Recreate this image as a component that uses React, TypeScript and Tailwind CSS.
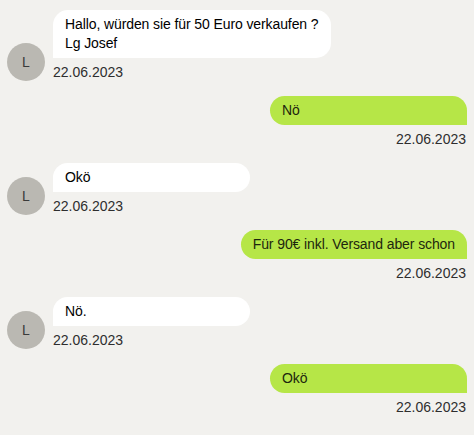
import React from "react";

type Msg = { side: "in" | "out"; text: string[]; date: string };

const messages: Msg[] = [
  { side: "in", text: ["Hallo, würden sie für 50 Euro verkaufen ?", "Lg Josef"], date: "22.06.2023" },
  { side: "out", text: ["Nö"], date: "22.06.2023" },
  { side: "in", text: ["Okö"], date: "22.06.2023" },
  { side: "out", text: ["Für 90€ inkl. Versand aber schon"], date: "22.06.2023" },
  { side: "in", text: ["Nö."], date: "22.06.2023" },
  { side: "out", text: ["Okö"], date: "22.06.2023" },
];

function Avatar() {
  return (
    <div className="mb-px flex h-[38px] w-[38px] shrink-0 items-center justify-center rounded-full bg-[#bab8b2] text-[14px] text-[#3a3a3a]">
      L
    </div>
  );
}

function Bubble({ msg }: { msg: Msg }) {
  const out = msg.side === "out";
  return (
    <div
      className={
        out
          ? "min-w-[197px] rounded-[15px] rounded-br-none bg-[#b6e647] px-[12px] py-[5px] text-[14px] leading-[19px] tracking-[-0.1px] text-[#1d260e]"
          : "min-w-[197px] rounded-[15px] rounded-bl-none bg-white px-[12px] py-[5px] text-[14px] leading-[19px] tracking-[-0.1px] text-black"
      }
    >
      {msg.text.map((line, i) => (
        <div key={i}>{line}</div>
      ))}
    </div>
  );
}

export default function App() {
  return (
    <div
      className="flex min-h-screen flex-col gap-[14px] bg-[#f2f1ee] pl-[7px] pr-[7px] pt-[10px]"
      style={{ fontFamily: '"Liberation Sans", Arial, sans-serif' }}
    >
      {messages.map((m, i) =>
        m.side === "in" ? (
          <div key={i} className="flex items-end gap-[8px]">
            <Avatar />
            <div className="flex flex-col items-start">
              <Bubble msg={m} />
              <div className="mt-[4px] text-[14px] leading-[20px] text-[#2e2e2e]">{m.date}</div>
            </div>
          </div>
        ) : (
          <div key={i} className="flex flex-col items-end">
            <Bubble msg={m} />
            <div className="mt-[4px] pr-px text-[14px] leading-[20px] text-[#2e2e2e]">{m.date}</div>
          </div>
        )
      )}
    </div>
  );
}
